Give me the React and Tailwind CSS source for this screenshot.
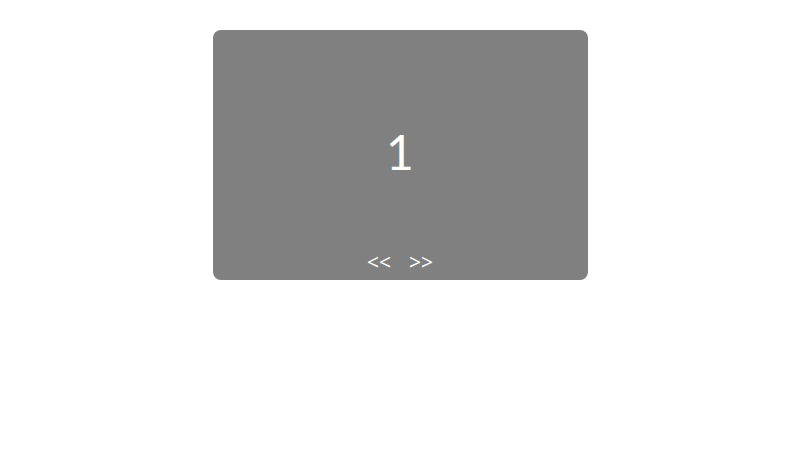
import React, { useState } from 'react'

const slides = ['1', '2', '3']

const App = () => {
  const [index, setIndex] = useState(0)

  const prev = () => setIndex((i) => (i - 1 + slides.length) % slides.length)
  const next = () => setIndex((i) => (i + 1) % slides.length)

  return (
    <div className="w-full min-h-screen bg-white flex justify-center pt-[30px] font-['Lato','DejaVu_Sans',sans-serif]">
      {/* Slide card */}
      <div className="relative w-[375px] h-[250px] bg-[#808080] rounded-lg text-white">
        <div className="h-full flex items-center justify-center pb-[6px]">
          <span className="text-[48px] leading-none">{slides[index]}</span>
        </div>

        {/* Controls */}
        <div className="absolute bottom-[6px] left-0 right-0 flex justify-center gap-[18px] font-['Open_Sans',sans-serif]">
          <button onClick={prev} className="text-[21px] leading-6 text-white">
            &lt;&lt;
          </button>
          <button onClick={next} className="text-[21px] leading-6 text-white">
            &gt;&gt;
          </button>
        </div>
      </div>
    </div>
  )
}

export default App
